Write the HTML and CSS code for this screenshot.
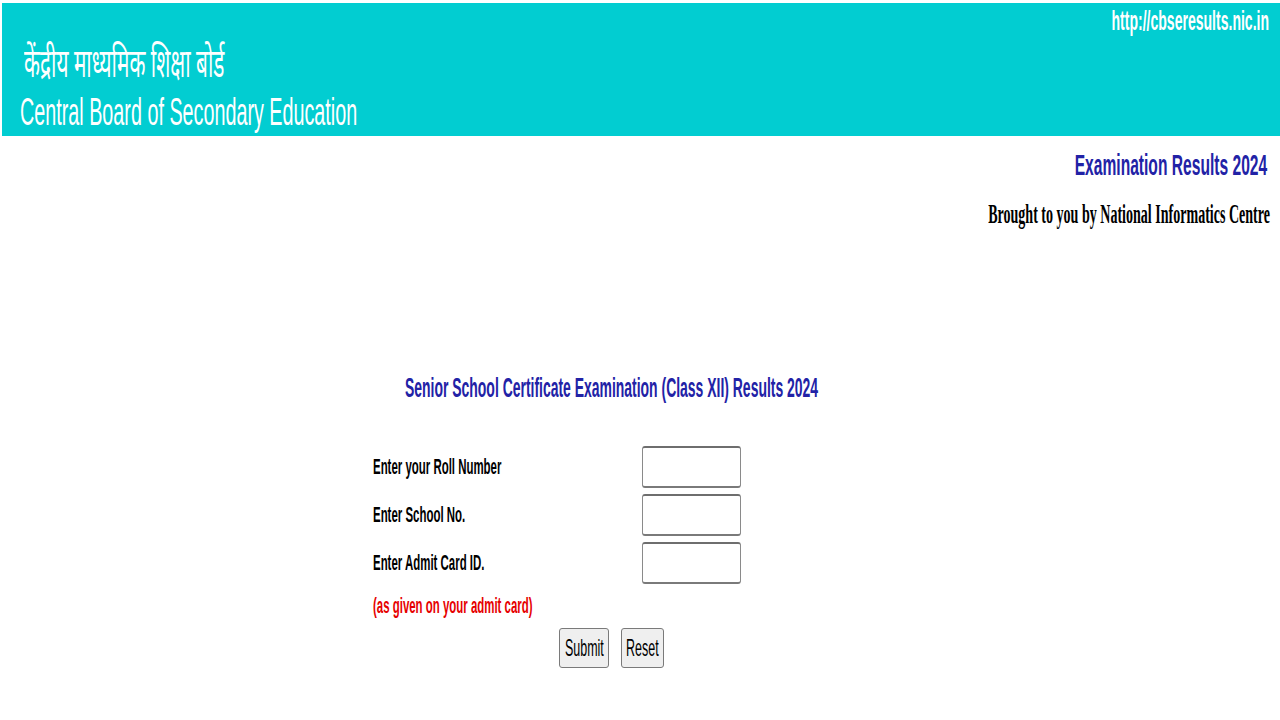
FILE: index.html
```html
<!DOCTYPE html>
<html lang="en">
<head>
<meta charset="utf-8">
<title>CBSE Examination Results 2024</title>
<link rel="stylesheet" href="styles.css">
</head>
<body>
<div class="page">
  <header class="banner">
    <div class="url-row"><span class="sx sx-r">http://cbseresults.nic.in</span></div>
    <div class="hindi"><span class="sx sx-l">केंद्रीय माध्यमिक शिक्षा बोर्ड</span></div>
    <div class="english"><span class="sx sx-l">Central Board of Secondary Education</span></div>
  </header>

  <div class="exam-title"><span class="sx sx-r">Examination Results 2024</span></div>
  <div class="nic"><span class="sx sx-r">Brought to you by National Informatics Centre</span></div>

  <h1 class="heading"><span class="sx sx-l heading-text">Senior School Certificate Examination (Class XII) Results 2024</span></h1>

  <form class="form" onsubmit="return false;">
    <div class="row">
      <label class="label" for="roll"><span class="sx sx-l">Enter your Roll Number</span></label>
      <input class="field" id="roll" type="text">
    </div>
    <div class="row">
      <label class="label" for="school"><span class="sx sx-l">Enter School No.</span></label>
      <input class="field" id="school" type="text">
    </div>
    <div class="row">
      <label class="label" for="admit"><span class="sx sx-l">Enter Admit Card ID.</span></label>
      <input class="field" id="admit" type="text">
    </div>
    <div class="note"><span class="sx sx-l">(as given on your admit card)</span></div>
    <div class="buttons">
      <button class="btn btn-submit" type="submit"><span class="sx sx-c">Submit</span></button>
      <button class="btn btn-reset" type="reset"><span class="sx sx-c">Reset</span></button>
    </div>
  </form>
</div>
</body>
</html>
```

FILE: styles.css
```css
html, body {
  margin: 0;
  padding: 0;
  background: #ffffff;
  overflow: hidden;
}

.page {
  width: 1280px;
  font-family: "Liberation Sans", Arial, sans-serif;
  color: #000;
}

/* the reference is horizontally condensed: text is squeezed to 52% width */
.sx {
  display: inline-block;
  white-space: nowrap;
  transform: scaleX(0.52);
}
.sx-l { transform-origin: left center; }
.sx-r { transform-origin: right center; }
.sx-c { transform-origin: center center; flex: none; }

.banner {
  margin: 3px 0 0 2px;
  height: 133px;
  background: #02cdd1;
  color: #ffffff;
  display: flex;
  flex-direction: column;
}

.url-row {
  height: 34px;
  padding-top: 2px;
  box-sizing: border-box;
  display: flex;
  justify-content: flex-end;
  padding-right: 11px;
  font-size: 27px;
  line-height: 32px;
  font-weight: bold;
}

.hindi {
  height: 54px;
  line-height: 60px;
  padding-left: 22px;
  font-size: 40px;
  font-family: "Noto Sans Devanagari", "Lohit Devanagari", "Noto Sans", "FreeSans", sans-serif;
}

.english {
  height: 45px;
  line-height: 43px;
  padding-left: 18px;
  font-size: 38px;
}

.exam-title {
  margin-top: 12px;
  text-align: right;
  padding-right: 13px;
  font-size: 30px;
  line-height: 34px;
  font-weight: bold;
  color: #2222a6;
}

.nic {
  margin-top: 14px;
  text-align: right;
  padding-right: 10px;
  font-family: "Liberation Serif", "Times New Roman", serif;
  font-size: 27px;
  line-height: 36px;
  font-weight: bold;
  color: #000;
}

.heading {
  margin: 139px 0 0 0;
  padding-left: 405px;
  font-size: 27px;
  line-height: 34px;
  font-weight: bold;
  color: #2222a6;
}

.heading-text {
  transform: scaleX(0.5165);
}

.form {
  margin-top: 38px;
  padding-left: 373px;
}

.row {
  height: 48px;
  display: flex;
  align-items: center;
}

.label {
  width: 269px;
  font-size: 22px;
  line-height: 26px;
  font-weight: bold;
}

.field {
  box-sizing: border-box;
  width: 99px;
  height: 42px;
  margin: 0;
  padding: 0 2px;
  border-style: solid;
  border-color: #6e6e6e #8a8a8a #7a7a7a #8a8a8a;
  border-width: 2px 1px 2px 1px;
  border-radius: 3px;
  background: #fff;
  font-size: 22px;
}

.note {
  height: 38px;
  display: flex;
  align-items: center;
  font-size: 22px;
  line-height: 26px;
  font-weight: bold;
  color: #e60000;
}

.buttons {
  margin-top: 3px;
  padding-left: 186px;
  display: flex;
  gap: 12px;
}

.btn {
  box-sizing: border-box;
  height: 40px;
  margin: 0;
  padding: 0;
  display: flex;
  align-items: center;
  justify-content: center;
  overflow: visible;
  border: 1px solid #7a7a7a;
  border-radius: 3px;
  background: #efefef;
  font-family: "Liberation Sans", Arial, sans-serif;
  font-size: 24px;
  line-height: 28px;
  color: #000;
}

.btn-submit { width: 50px; }
.btn-reset { width: 43px; }
```
